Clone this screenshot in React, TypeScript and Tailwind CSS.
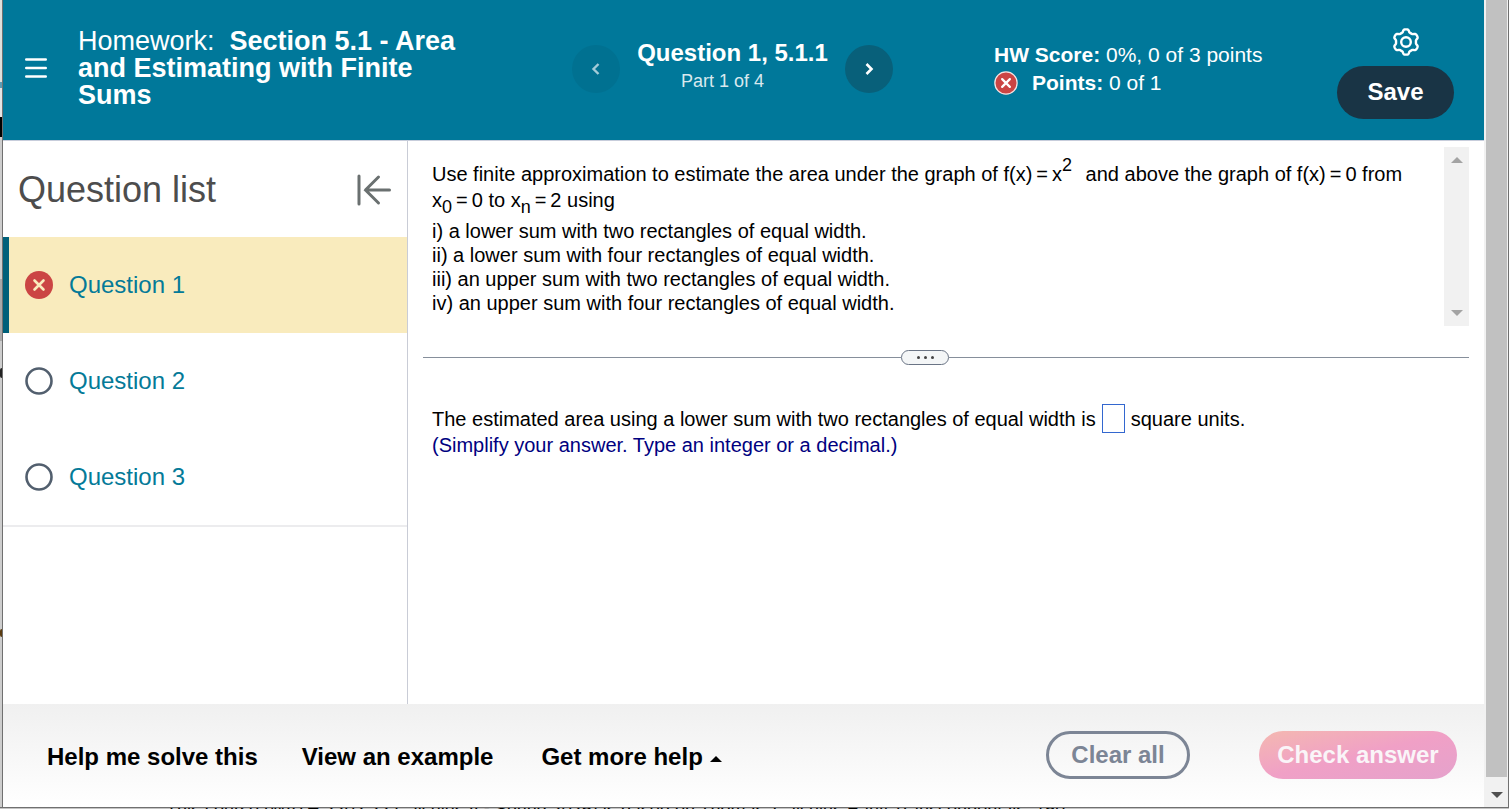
import type { ReactNode } from "react";

type Status = "wrong" | "open";

type Question = {
  id: number;
  label: string;
  status: Status;
};

const questions: Question[] = [
  { id: 1, label: "Question 1", status: "wrong" },
  { id: 2, label: "Question 2", status: "open" },
  { id: 3, label: "Question 3", status: "open" },
];

const activeId = 1;

/** Six-lobed cog outline, centred on 14,14 */
function gearPath() {
  const points: string[] = [];
  for (let deg = 0; deg < 360; deg += 3) {
    const a = (deg * Math.PI) / 180;
    const wave = Math.tanh(-2 * Math.cos(6 * a));
    const r = 11.3 + 1.4 * wave;
    points.push(`${(14 + r * Math.cos(a)).toFixed(2)} ${(14 + r * Math.sin(a)).toFixed(2)}`);
  }
  return `M${points.join("L")}Z`;
}

function WrongIcon({ className, ring, cross }: { className: string; ring?: boolean; cross: string }) {
  return (
    <svg viewBox="0 0 28 28" className={className} aria-label="Incorrect" role="img">
      <circle cx="14" cy="14" r={ring ? 13 : 14} fill="#cb4544" stroke={ring ? "#f3e5e5" : "none"} strokeWidth="1.5" />
      <path d="M9.5 9.5l9 9M18.5 9.500l-9 9" stroke={cross} strokeWidth="2.6" strokeLinecap="round" />
    </svg>
  );
}

function OpenIcon() {
  return (
    <svg viewBox="0 0 28 28" className="size-7" aria-hidden="true">
      <circle cx="14" cy="14" r="12.5" fill="#fff" stroke="#525f6e" strokeWidth="2.6" />
    </svg>
  );
}

function Header() {
  return (
    <header className="flex h-[141px] shrink-0 border-b border-[#c7cddb] bg-[#00789a] text-white">
      <div className="flex flex-1 items-center pb-1 pl-[22px]">
        <button type="button" aria-label="Menu" className="shrink-0">
          <svg viewBox="0 0 22 22" className="size-[22px]" stroke="#fff" strokeWidth="2.4" strokeLinecap="round">
            <path d="M1.2 2.5h19.6M1.2 11h19.6M1.2 19.5h19.6" />
          </svg>
        </button>
        <h1 className="ml-[31px] max-w-[400px] text-[27px] leading-[27px]">
          Homework:&nbsp; <b>Section 5.1 - Area and Estimating with Finite Sums</b>
        </h1>
      </div>

      <nav className="flex w-[321px] shrink-0 items-center justify-between pb-[3px]" aria-label="Question">
        <button
          type="button"
          disabled
          aria-label="Previous question"
          className="flex size-12 items-center justify-center rounded-full bg-[#007191]"
        >
          <svg viewBox="0 0 12 12" className="size-3" fill="none" stroke="#a3cbd8" strokeWidth="2.4">
            <path d="M8.5 1L3.5 6l5 5" />
          </svg>
        </button>
        <div className="pb-[3px] text-center">
          <h2 className="text-2xl font-bold leading-7">Question 1, 5.1.1</h2>
          <p className="pr-5 text-lg leading-7 text-[#d9e8ee]">Part 1 of 4</p>
        </div>
        <button
          type="button"
          aria-label="Next question"
          className="flex size-12 items-center justify-center rounded-full bg-[#08607a]"
        >
          <svg viewBox="0 0 12 12" className="size-3" fill="none" stroke="#fff" strokeWidth="2.6">
            <path d="M3.5 1l5 5-5 5" />
          </svg>
        </button>
      </nav>

      <div className="ml-[101px] flex w-[268px] shrink-0 flex-col justify-center whitespace-nowrap pb-[3px] text-[21px] leading-7">
        <p>
          <b>HW Score:</b> 0%, 0 of 3 points
        </p>
        <p className="flex items-center">
          <WrongIcon className="mr-[14px] size-6" ring cross="#fff" />
          <span>
            <b>Points:</b> 0 of 1
          </span>
        </p>
      </div>

      <div className="ml-[75px] mr-[30px] flex w-[117px] shrink-0 flex-col items-center pt-7">
        <button type="button" aria-label="Settings" className="ml-5">
          <svg viewBox="0 0 28 28" className="size-7" fill="none" stroke="#fff" strokeWidth="2.4" strokeLinejoin="round">
            <path d={gearPath()} />
            <circle cx="14" cy="14" r="4.8" />
          </svg>
        </button>
        <button type="button" className="mt-[10px] h-[53px] w-full rounded-full bg-[#193445] pb-[2px] text-2xl font-bold">
          Save
        </button>
      </div>
    </header>
  );
}

function Sidebar() {
  return (
    <aside className="w-[405px] shrink-0 border-r border-[#c9ccd6]">
      <div className="flex h-24 items-center justify-between pl-[15px] pr-4 pt-[2px]">
        <h2 className="text-4xl text-[#4d4d4d]">Question list</h2>
        <button type="button" aria-label="Collapse question list">
          <svg viewBox="0 0 34 32" className="h-8 w-[34px]" fill="none" stroke="#6a7070" strokeWidth="3" strokeLinecap="round">
            <path d="M2 2v28M8.5 16h24M21.500 3L8.500 16l13 13" />
          </svg>
        </button>
      </div>
      <ul className="border-b-2 border-[#ececee]">
        {questions.map((q) => (
          <li key={q.id}>
            <a
              href={`#question-${q.id}`}
              aria-current={q.id === activeId ? "true" : undefined}
              className={`flex h-24 items-center gap-4 border-l-[6px] pl-4 text-2xl text-[#047a98] ${
                q.id === activeId ? "border-[#00607a] bg-[#f9ebbd]" : "border-transparent"
              }`}
            >
              {q.status === "wrong" ? <WrongIcon className="size-7" cross="#f9ebbd" /> : <OpenIcon />}
              {q.label}
            </a>
          </li>
        ))}
      </ul>
    </aside>
  );
}

function Sub({ children }: { children: ReactNode }) {
  return <sub className="bottom-[-6px] text-lg leading-[0]">{children}</sub>;
}

function Equals() {
  return <span className="mx-1">=</span>;
}

function Problem() {
  return (
    <section className="mt-[6px] flex h-[179px] pl-[9px]">
      <div className="flex-1 pr-6 pt-[14px] text-xl leading-6">
        <p className="leading-[26px]">
          Use finite approximation to estimate the area under the graph of f(x)
          <Equals />x<sup className="top-[-10px] text-lg leading-[0]">2</sup>
          <span className="ml-2"> and above the graph of f(x)</span>
          <Equals />0 from{" "}
          <span className="whitespace-nowrap">
            x<Sub>0</Sub>
            <Equals />0
          </span>{" "}
          to x<Sub>n</Sub>
          <Equals />2 using
        </p>
        <ol className="mt-[6px]">
          <li>i) a lower sum with two rectangles of equal width.</li>
          <li>ii) a lower sum with four rectangles of equal width.</li>
          <li>iii) an upper sum with two rectangles of equal width.</li>
          <li>iv) an upper sum with four rectangles of equal width.</li>
        </ol>
      </div>
      <div className="flex w-[25px] shrink-0 flex-col items-center justify-between bg-[#f1f1f1] py-[10px]" aria-hidden="true">
        <svg viewBox="0 0 12 6" className="h-[6px] w-3" fill="#a3a3a3">
          <path d="M0 6l6-6 6 6z" />
        </svg>
        <svg viewBox="0 0 12 6" className="h-[6px] w-3" fill="#a3a3a3">
          <path d="M0 0l6 6 6-6z" />
        </svg>
      </div>
    </section>
  );
}

function Divider() {
  return (
    <div className="mt-6 flex items-center">
      <div className="h-px flex-[23] bg-[#868f9b]" />
      <button
        type="button"
        aria-label="Resize panes"
        className="flex h-[15px] w-12 items-center justify-center gap-1 rounded-full border border-[#6a7485] bg-[#f4f6f7]"
      >
        <span className="size-[3px] rounded-full bg-[#444]" />
        <span className="size-[3px] rounded-full bg-[#444]" />
        <span className="size-[3px] rounded-full bg-[#444]" />
      </button>
      <div className="h-px flex-[25] bg-[#868f9b]" />
    </div>
  );
}

function Answer() {
  return (
    <section className="mt-[39px] pl-[9px] text-xl">
      <div className="flex items-center">
        <label htmlFor="answer">The estimated area using a lower sum with two rectangles of equal width is</label>
        <input id="answer" type="text" className="mx-[6px] h-[29px] w-[23px] border border-[#3367cf] text-center outline-none" />
        <span>square units.</span>
      </div>
      <p className="leading-6 text-[#000080]">(Simplify your answer. Type an integer or a decimal.)</p>
    </section>
  );
}

function Footer() {
  return (
    <footer className="flex h-[103px] shrink-0 items-center justify-between bg-linear-to-b from-[#f0f0f0] to-white pb-[2px] pl-11 pr-[27px] text-2xl font-bold text-black">
      <div className="flex pt-1">
        <button type="button">Help me solve this</button>
        <button type="button" className="ml-11">
          View an example
        </button>
        <button type="button" className="ml-12 flex items-center gap-[7px]">
          Get more help
          <svg viewBox="0 0 12 6" className="mt-1 h-[6px] w-3" fill="#000">
            <path d="M0 6l6-6 6 6z" />
          </svg>
        </button>
      </div>
      <div className="flex gap-[69px]">
        <button type="button" className="h-12 w-36 rounded-full border-3 border-[#7c8595] text-[#7c8595]">
          Clear all
        </button>
        <button
          type="button"
          className="h-12 w-[198px] rounded-full bg-linear-to-br from-[#f4b8b0] via-[#f0a0c6] to-[#e5a2cc] text-[#faf5f8]"
        >
          Check answer
        </button>
      </div>
    </footer>
  );
}

/** Sliver of the page behind the popup window */
function BackdropEdge() {
  return (
    <div className="flex w-[3px] shrink-0 flex-col border-r border-[#707070] bg-[#cdcdcd]" aria-hidden="true">
      <div className="h-[82px] bg-[#dfdfdb]" />
      <div className="h-[6px] bg-[#5b9db5]" />
      <div className="h-[29px] bg-[#e4e4e4]" />
      <div className="h-5 bg-black" />
      <div className="mt-[142px] h-[62px] bg-[#a9a9a9]" />
      <div className="mt-[27px] h-[10px] rounded-l-full bg-[#222]" />
      <div className="mt-[251px] h-2 rounded-l-full bg-[#5a3c10]" />
    </div>
  );
}

function WindowScrollbar() {
  return (
    <div className="flex w-[25px] shrink-0 flex-col border-r border-[#707070] bg-[#f1f1f1] pl-[2px] pr-px" aria-hidden="true">
      <div className="flex-1 bg-[#c1c1c1]" />
      <div className="flex h-[30px] items-center justify-center pt-[5px]">
        <svg viewBox="0 0 12 6" className="h-[6px] w-3" fill="#505050">
          <path d="M0 0l6 6 6-6z" />
        </svg>
      </div>
    </div>
  );
}

export default function App() {
  return (
    <div className="flex h-screen flex-col bg-white font-['Liberation_Sans',Arial,sans-serif] text-black">
      <div className="flex min-h-0 flex-1">
        <BackdropEdge />
        <div className="flex min-w-0 flex-1 flex-col">
          <Header />
          <div className="flex min-h-0 flex-1">
            <Sidebar />
            <main className="min-w-0 flex-1 pl-[15px] pr-[15px]">
              <Problem />
              <Divider />
              <Answer />
            </main>
          </div>
          <Footer />
        </div>
        <WindowScrollbar />
      </div>
      <div className="flex h-[2px] shrink-0 items-center overflow-hidden border-t border-[#707070] bg-[#c4c4c4] pl-[166px]">
        <p className="whitespace-nowrap text-lg">
          This course (MATH 2202.22 Calculus II - Spring 2025) is based on Thomas' Calculus Early Transcendentals, 15e
        </p>
      </div>
    </div>
  );
}
